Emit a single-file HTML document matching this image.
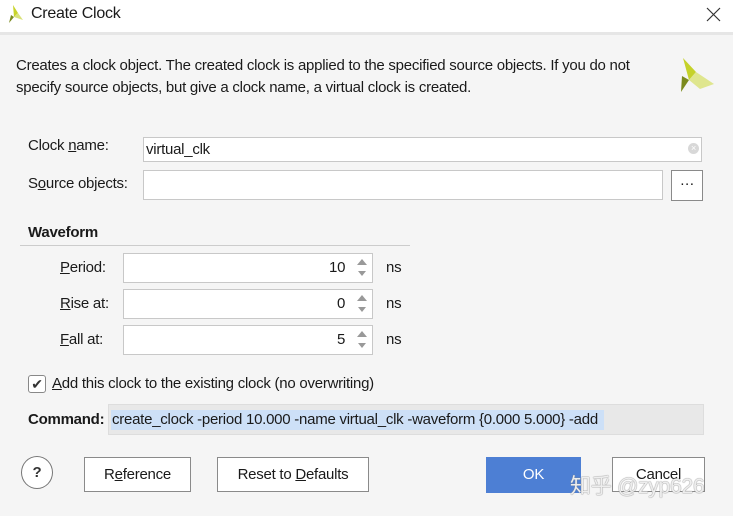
<!DOCTYPE html>
<html><head><meta charset="utf-8"><style>
*{margin:0;padding:0;box-sizing:border-box}
body{width:733px;height:516px;background:#f5f5f5;font-family:"Liberation Sans","Noto Sans CJK SC",sans-serif;font-size:15px;color:#1a1a1a;position:relative;overflow:hidden;letter-spacing:-0.25px}
.a{position:absolute;white-space:nowrap}
.inp{position:absolute;background:#fff;border:1px solid #c8c8c8}
.btn{position:absolute;background:#fff;border:1px solid #8a8a8a;text-align:center;font-size:15px}
u{text-decoration:underline}
</style></head><body>
<div class="a" style="left:0;top:0;width:733px;height:32px;background:#fff"></div>
<div class="a" style="left:0;top:32px;width:733px;height:3px;background:#e6e6e6"></div>
<svg class="a" style="left:5px;top:4px" width="22" height="20" viewBox="0 0 22 20"><polygon points="8,1 13,9 9,13" fill="#c8d42a"/><polygon points="9,13 4,19 6,11" fill="#7a8a1e"/><polygon points="9,13 13,9 18,16" fill="#d9e27a"/></svg>
<div class="a" style="left:31px;top:5px;font-size:16px">Create Clock</div>
<svg class="a" style="left:706px;top:7px" width="15" height="15" viewBox="0 0 15 15"><path d="M1 1L14 14M14 1L1 14" stroke="#333" stroke-width="1.2"/></svg>
<div class="a" style="left:16px;top:55px;line-height:22px">Creates a clock object. The created clock is applied to the specified source objects. If you do not<br>specify source objects, but give a clock name, a virtual clock is created.</div>
<svg class="a" style="left:678px;top:56px" width="38" height="38" viewBox="0 0 38 38"><polygon points="5,2 18,16 11,24" fill="#c5d22a"/><polygon points="11,24 3,36 4,20" fill="#7b8a1d"/><polygon points="11,24 18,16 36,28 22,33" fill="#dfe68e"/></svg>
<div class="a" style="left:28px;top:137px">Clock <u>n</u>ame:</div>
<div class="inp" style="left:143px;top:137px;width:559px;height:25px"></div>
<div class="a" style="left:146px;top:141px">virtual_clk</div>
<div class="a" style="left:688px;top:143px;width:11px;height:11px;border-radius:50%;background:#d8d8d8;color:#fff;font-size:9px;line-height:11px;text-align:center">×</div>
<div class="a" style="left:28px;top:175px">S<u>o</u>urce objects:</div>
<div class="inp" style="left:143px;top:170px;width:520px;height:30px"></div>
<div class="btn" style="left:671px;top:170px;width:32px;height:31px;line-height:26px">···</div>
<div class="a" style="left:28px;top:224px;font-weight:bold">Waveform</div>
<div class="a" style="left:20px;top:245px;width:390px;height:1px;background:#ccc"></div>
<div class="a" style="left:60px;top:259px"><u>P</u>eriod:</div>
<div class="a" style="left:60px;top:295px"><u>R</u>ise at:</div>
<div class="a" style="left:60px;top:331px"><u>F</u>all at:</div>
<div class="inp" style="left:123px;top:253px;width:250px;height:30px"></div>
<div class="inp" style="left:123px;top:289px;width:250px;height:30px"></div>
<div class="inp" style="left:123px;top:325px;width:250px;height:30px"></div>
<div class="a" style="left:329px;top:259px">10</div>
<div class="a" style="left:337px;top:295px">0</div>
<div class="a" style="left:337px;top:331px">5</div>
<svg class="a" style="left:355px;top:257px" width="14" height="22"><path d="M2 8L7 2L12 8Z M3 14L7 19L11 14Z" fill="#999"/></svg>
<svg class="a" style="left:355px;top:293px" width="14" height="22"><path d="M2 8L7 2L12 8Z M3 14L7 19L11 14Z" fill="#999"/></svg>
<svg class="a" style="left:355px;top:329px" width="14" height="22"><path d="M2 8L7 2L12 8Z M3 14L7 19L11 14Z" fill="#999"/></svg>
<div class="a" style="left:386px;top:259px">ns</div>
<div class="a" style="left:386px;top:295px">ns</div>
<div class="a" style="left:386px;top:331px">ns</div>
<div class="a" style="left:28px;top:375px;width:18px;height:18px;border:1px solid #888;border-radius:3px;background:#fff;font-size:14px;line-height:16px;text-align:center;color:#333">✔</div>
<div class="a" style="left:52px;top:375px"><u>A</u>dd this clock to the existing clock (no overwriting)</div>
<div class="a" style="left:28px;top:411px;font-weight:bold">Command:</div>
<div class="a" style="left:108px;top:404px;width:596px;height:31px;background:#e8e8e8;border:1px solid #ddd"></div>
<div class="a" style="left:111px;top:410px;width:493px;height:20px;background:#cde0f7"></div>
<div class="a" style="left:112px;top:411px">create_clock -period 10.000 -name virtual_clk -waveform {0.000 5.000} -add</div>
<div class="a" style="left:21px;top:456px;width:32px;height:33px;border:1px solid #777;border-radius:50%;background:#fff;text-align:center;line-height:31px;font-weight:bold;color:#333">?</div>
<div class="btn" style="left:84px;top:457px;width:107px;height:35px;line-height:33px">R<u>e</u>ference</div>
<div class="btn" style="left:217px;top:457px;width:152px;height:35px;line-height:33px">Reset to <u>D</u>efaults</div>
<div class="a" style="left:486px;top:457px;width:95px;height:36px;background:#4d7fd4;color:#fff;text-align:center;line-height:36px">OK</div>
<div class="btn" style="left:612px;top:457px;width:93px;height:35px;line-height:33px">Cancel</div>
<div class="a" style="left:570px;top:470px;font-size:21px;color:rgba(255,255,255,0.85);text-shadow:0 0 1px #888,0 0 1px #888">知乎 @zyp626</div>
</body></html>
